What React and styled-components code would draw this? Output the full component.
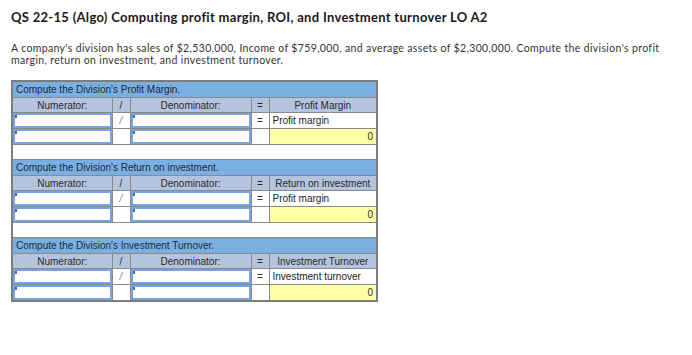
import React from "react";
import styled, { createGlobalStyle } from "styled-components";

const Global = createGlobalStyle`
  body {
    margin: 0;
    background: #fff;
  }
`;

const Page = styled.div`
  padding: 9px 11px;
`;

const Heading = styled.h1`
  margin: 0;
  font-family: "Lato", "Open Sans", sans-serif;
  font-weight: 700;
  font-size: 13px;
  letter-spacing: 0.3px;
  line-height: 16px;
  color: #1a1a1a;
`;

const Prompt = styled.p`
  margin: 17px 0 0;
  width: 668px;
  font-family: "Lato", "Open Sans", sans-serif;
  font-size: 10.5px;
  letter-spacing: 0.35px;
  line-height: 12px;
  color: #333;
`;

const Grid = styled.table`
  margin-top: 14px;
  width: 366px;
  table-layout: fixed;
  border-collapse: collapse;
  border: 2px solid #7d7d7d;
  font-family: "Liberation Sans", Arial, sans-serif;
  font-size: 10px;
  color: #222;
`;

const Cell = styled.td`
  border: 1px solid #8a8a8a;
  padding: 0;
  height: ${(p) => p.$h || 14}px;
  text-align: ${(p) => p.$align || "left"};
  background: ${(p) => p.$bg || "#fff"};
  vertical-align: middle;
  white-space: nowrap;
  overflow: hidden;
`;

const TitleCell = styled(Cell)`
  background: #7aafe3;
  padding-left: 3px;
  color: #1b2a3a;
`;

const HeadCell = styled(Cell)`
  background: #b4c4de;
  text-align: center;
  color: #2a2a2a;
`;

const Entry = styled.div`
  position: relative;
  height: 11px;
  border: 2px solid #79a3dc;
  background: #fff;
  &::before {
    content: "";
    position: absolute;
    left: 0;
    top: 0;
    width: 2px;
    height: 3px;
    background: #2f6fc8;
  }
`;

const Op = styled.span`
  font-style: ${(p) => (p.$slash ? "italic" : "normal")};
  color: ${(p) => (p.$slash ? "#8a7a6a" : "#333")};
`;

const Label = styled.span`
  padding-left: 3px;
  color: #222;
`;

const Result = styled.span`
  padding-right: 3px;
  color: #333;
`;

const sections = [
  {
    title: "Compute the Division's Profit Margin.",
    head: "Profit Margin",
    label: "Profit margin",
  },
  {
    title: "Compute the Division's Return on investment.",
    head: "Return on investment",
    label: "Profit margin",
  },
  {
    title: "Compute the Division's Investment Turnover.",
    head: "Investment Turnover",
    label: "Investment turnover",
  },
];

function Section({ s, last }) {
  return (
    <>
      <tr>
        <TitleCell colSpan={5} $h={15}>
          {s.title}
        </TitleCell>
      </tr>
      <tr>
        <HeadCell>Numerator:</HeadCell>
        <HeadCell>/</HeadCell>
        <HeadCell>Denominator:</HeadCell>
        <HeadCell>=</HeadCell>
        <HeadCell>{s.head}</HeadCell>
      </tr>
      <tr>
        <Cell>
          <Entry />
        </Cell>
        <Cell $align="center">
          <Op $slash>/</Op>
        </Cell>
        <Cell>
          <Entry />
        </Cell>
        <Cell $align="center">
          <Op>=</Op>
        </Cell>
        <Cell>
          <Label>{s.label}</Label>
        </Cell>
      </tr>
      <tr>
        <Cell>
          <Entry />
        </Cell>
        <Cell />
        <Cell>
          <Entry />
        </Cell>
        <Cell />
        <Cell $align="right" $bg="#ffffa6">
          <Result>0</Result>
        </Cell>
      </tr>
      {!last && (
        <tr>
          <Cell colSpan={5} $h={14} />
        </tr>
      )}
    </>
  );
}

export default function App() {
  return (
    <Page>
      <Global />
      <Heading>
        QS 22-15 (Algo) Computing profit margin, ROI, and Investment turnover LO A2
      </Heading>
      <Prompt>
        A company's division has sales of $2,530,000, Income of $759,000, and
        average assets of $2,300,000. Compute the division's profit margin,
        return on investment, and investment turnover.
      </Prompt>
      <Grid>
        <colgroup>
          <col style={{ width: 100 }} />
          <col style={{ width: 18 }} />
          <col style={{ width: 121 }} />
          <col style={{ width: 18 }} />
          <col style={{ width: 108 }} />
        </colgroup>
        <tbody>
          {sections.map((s, i) => (
            <Section key={i} s={s} last={i === sections.length - 1} />
          ))}
        </tbody>
      </Grid>
    </Page>
  );
}
